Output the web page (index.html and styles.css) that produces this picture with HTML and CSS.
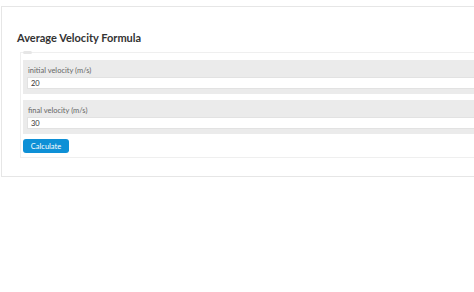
FILE: index.html
```html
<!DOCTYPE html>
<html lang="en">
<head>
    <meta charset="UTF-8">
    <meta name="viewport" content="width=device-width, initial-scale=1.0">
    <title>Average Velocity Formula</title>
    <link rel="stylesheet" href="styles.css">
</head>
<body>
    <div class="calc-box">
        <h2 class="calc-title">Average Velocity Formula</h2>

        <!-- calculator form -->
        <form class="calc-form" onsubmit="return false">
            <span class="legend"></span>
            <div class="field">
                <label for="v0">initial velocity (m/s)</label>
                <input type="text" id="v0" value="20">
            </div>
            <div class="field">
                <label for="v1">final velocity (m/s)</label>
                <input type="text" id="v1" value="30">
            </div>
            <button type="button" class="calc-btn">Calculate</button>
        </form>
    </div>
</body>
</html>
```

FILE: styles.css
```css
html {
    overflow: hidden;
}
body {
    margin: 0;
    font-family: Lato, "Open Sans", Arial, sans-serif;
    color: #333;
}
.calc-box {
    box-sizing: border-box;
    width: 620px;
    height: 171px;
    margin: 6px 0 0 1px;
    padding: 24px 0 0 15px;
    border: 1px solid #e6e6e6;
}
.calc-title {
    margin: 0 0 7px 0;
    font-size: 11px;
    line-height: 14px;
    font-weight: 700;
    color: #333;
}
.calc-form {
    position: relative;
    margin: 0 0 0 3px;
    padding: 7px 0 4px 2px;
    border: 1px solid #efefef;
}
.legend {
    position: absolute;
    top: -2px;
    left: 2px;
    width: 9px;
    height: 3px;
    border-radius: 2px;
    background-color: #e6e6e6;
}
.field {
    background-color: #ebebeb;
    padding: 0 0 5px 4px;
    margin-bottom: 6px;
}
.field:last-of-type {
    margin-bottom: 5px;
}
.field label {
    display: block;
    padding: 6px 0 0 1px;
    height: 11px;
    font-size: 7.5px;
    line-height: 10px;
    color: #666;
}
.field input {
    display: block;
    box-sizing: border-box;
    width: 100%;
    height: 12px;
    margin: 0;
    padding: 0 0 0 3px;
    border: 1px solid #e2e2e2;
    border-right: none;
    background-color: #fff;
    font-family: Lato, "Open Sans", Arial, sans-serif;
    font-size: 7.5px;
    color: #333;
    outline: none;
}
.calc-btn {
    display: block;
    width: 46px;
    height: 14px;
    margin-top: 0;
    padding: 0;
    border: none;
    border-radius: 3px;
    background-color: #0e90d6;
    color: #fff;
    font-family: Lato, "Open Sans", Arial, sans-serif;
    font-size: 7.5px;
    cursor: pointer;
}
```
